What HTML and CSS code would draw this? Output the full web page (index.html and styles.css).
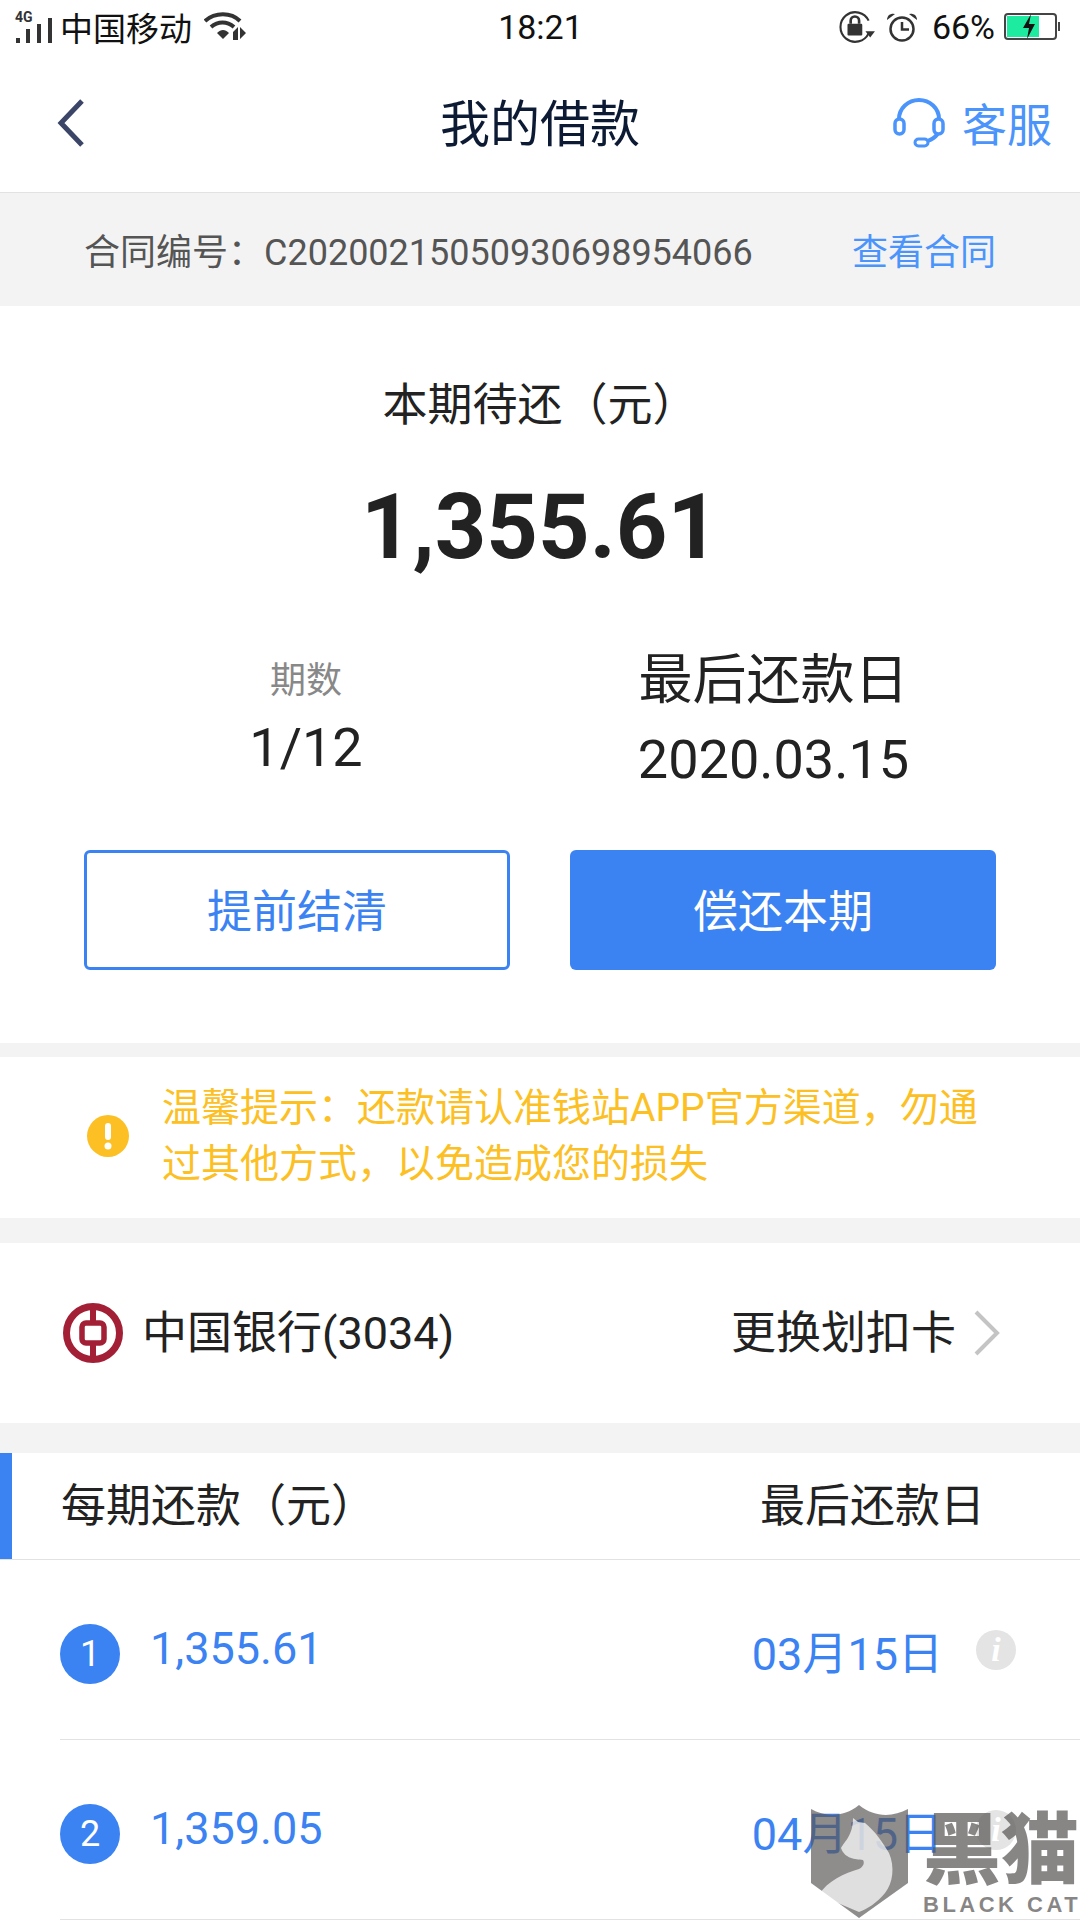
FILE: index.html
```html
<!DOCTYPE html>
<html>
<head lang="zh">
  <meta charset="UTF-8">
  <title>我的借款</title>
  <link rel="stylesheet" href="styles.css">
</head>
<body>
  <div class="page">
    <div class="status">
      <div class="status-left">
        <svg class="signal" width="40" height="34" viewBox="0 0 40 34">
          <text x="0" y="12" class="signal-type">4G</text>
          <rect x="1" y="28" width="4" height="5" fill="#333"/>
          <rect x="11" y="19" width="4" height="14" fill="#333"/>
          <rect x="22" y="14" width="4" height="19" fill="#333"/>
          <rect x="33" y="8" width="4" height="25" fill="#333"/>
        </svg>
        <span class="carrier">中国移动</span>
        <svg class="wifi" width="44" height="30" viewBox="0 0 44 30">
          <path d="M1 9 C11 0 27 0 36 9" fill="none" stroke="#333" stroke-width="4"/>
          <path d="M7 15 C14 9 23 9 30 15" fill="none" stroke="#333" stroke-width="4"/>
          <path d="M13 21 C17 17 21 17 25 21 L19 27 Z" fill="#333"/>
          <path d="M29 28 L29 20 L34 15 L34 28 Z M36 15 L42 21 L36 27 Z" fill="#333"/>
        </svg>
      </div>
      <div class="clock">18:21</div>
      <div class="status-right">
        <svg width="38" height="34" viewBox="0 0 36 32">
          <path d="M29 22 A14 14 0 1 1 29 10" fill="none" stroke="#333" stroke-width="2"/>
          <path d="M26 20 L35 20 L30.500 26 Z" fill="#333"/>
          <rect x="9" y="13" width="14" height="11" rx="1" fill="#333"/>
          <path d="M12 13 V10 A4 4 0 0 1 20 10 V13" fill="none" stroke="#333" stroke-width="2.500"/>
        </svg>
        <svg class="alarm" width="32" height="32" viewBox="0 0 32 32">
          <circle cx="16" cy="18" r="11.500" fill="none" stroke="#333" stroke-width="2.500"/>
          <path d="M16 11 V18.500 H23" fill="none" stroke="#333" stroke-width="2.500"/>
          <path d="M1 9 A6 6 0 0 1 9 3 Z M31 9 A6 6 0 0 0 23 3 Z" fill="#333"/>
        </svg>
        <span class="battery-text">66%</span>
        <svg class="battery" width="56" height="28" viewBox="0 0 56 28">
          <rect x="1" y="1" width="51" height="25" rx="3" fill="none" stroke="#444" stroke-width="2"/>
          <rect x="3" y="3" width="32" height="21" fill="#1ceba0"/>
          <rect x="54" y="9" width="2" height="9" fill="#444"/>
          <path d="M27 1 L19 15 L25 15 L23 26 L31 11 L25 11 Z" fill="#111"/>
        </svg>
      </div>
    </div>

    <div class="nav">
      <svg class="nav-back" width="30" height="48" viewBox="0 0 30 48">
        <path d="M26 2 L5 24 L26 46" fill="none" stroke="#3a4568" stroke-width="5"/>
      </svg>
      <div class="nav-title">我的借款</div>
      <div class="nav-service">
        <svg width="54" height="50" viewBox="0 0 54 50">
          <path d="M7 24 V21 A20 19 0 0 1 47 21 V30 C47 38 40 42 32 44" fill="none" stroke="#4a94fb" stroke-width="4"/>
          <rect x="3" y="21" width="9" height="15" rx="4.500" fill="#fff" stroke="#4a94fb" stroke-width="3.500"/>
          <rect x="42" y="21" width="9" height="15" rx="4.500" fill="#fff" stroke="#4a94fb" stroke-width="3.500"/>
          <rect x="23" y="41" width="13" height="7" rx="3.500" fill="#fff" stroke="#4a94fb" stroke-width="3"/>
        </svg>
        <span>客服</span>
      </div>
    </div>

    <div class="contract">
      <span class="contract-no">合同编号：C20200215050930698954066</span>
      <span class="contract-link">查看合同</span>
    </div>

    <div class="summary">
      <div class="summary-label">本期待还（元）</div>
      <div class="summary-amount">1,355.61</div>
      <div class="summary-info">
        <div class="info-cell">
          <div class="info-small">期数</div>
          <div class="info-num">1/12</div>
        </div>
        <div class="info-cell">
          <div class="info-big">最后还款日</div>
          <div class="info-date">2020.03.15</div>
        </div>
      </div>
      <div class="actions">
        <div class="btn btn-line">提前结清</div>
        <div class="btn btn-fill">偿还本期</div>
      </div>
    </div>

    <div class="tip">
      <div class="tip-icon">
        <svg width="42" height="42" viewBox="0 0 42 42">
          <circle cx="21" cy="21" r="21" fill="#fcc024"/>
          <rect x="18" y="8" width="6" height="17" rx="3" fill="#fff"/>
          <circle cx="21" cy="31" r="3.500" fill="#fff"/>
        </svg>
      </div>
      <div class="tip-text">温馨提示：还款请认准钱站APP官方渠道，勿通<br>过其他方式，以免造成您的损失</div>
    </div>

    <div class="bank">
      <svg class="bank-logo" width="60" height="60" viewBox="0 0 60 60">
        <circle cx="30" cy="30" r="26.500" fill="none" stroke="#a31f36" stroke-width="7"/>
        <rect x="19" y="20" width="22" height="20" rx="4" fill="none" stroke="#a31f36" stroke-width="5.500"/>
        <rect x="27" y="4" width="6" height="15" fill="#a31f36"/>
        <rect x="27" y="41" width="6" height="15" fill="#a31f36"/>
      </svg>
      <span class="bank-name">中国银行(3034)</span>
      <span class="bank-change">更换划扣卡</span>
      <svg class="bank-arrow" width="28" height="46" viewBox="0 0 28 46">
        <path d="M3 2 L24 23 L3 44" fill="none" stroke="#c4c4c4" stroke-width="4"/>
      </svg>
    </div>

    <div class="plan">
      <div class="plan-head">
        <span>每期还款（元）</span>
        <span class="plan-head-date">最后还款日</span>
      </div>
      <ul class="plan-list">
        <li class="plan-row">
          <span class="plan-no">1</span>
          <span class="plan-money">1,355.61</span>
          <span class="plan-date">03月15日</span>
          <span class="plan-info">i</span>
        </li>
        <li class="plan-row">
          <span class="plan-no">2</span>
          <span class="plan-money">1,359.05</span>
          <span class="plan-date">04月15日</span>
          <span class="plan-info">i</span>
        </li>
      </ul>
    </div>

    <!-- 水印 -->
    <div class="mark">
      <svg width="98" height="114" viewBox="0 0 98 114">
        <path d="M0 4 C14 12 32 13 48 0 C64 13 82 12 97 4 V78 L48 113 L0 78 Z" fill="rgba(90,86,86,.68)"/>
        <path d="M42 13 L47 17 L54 18 C64 26 72 38 78 48 C84 62 82 78 74 88 C66 98 56 104 48 107 L8 90 C16 76 34 68 48 64 C52 62 54 58 52 55 C44 54 34 54 30 43 C34 36 42 30 42 13 Z" fill="rgba(255,255,255,.72)"/>
      </svg>
      <div class="mark-words">
        <div class="mark-cn">黑猫</div>
        <div class="mark-en">BLACK CAT</div>
      </div>
    </div>
  </div>
</body>
</html>
```

FILE: styles.css
```css
* {
  margin: 0;
  padding: 0;
  box-sizing: border-box;
}
ul {
  list-style: none;
}
body {
  background: #fff;
  font-family: Roboto, "Noto Sans CJK SC", sans-serif;
  color: #222;
}
.page {
  position: relative;
  width: 1080px;
  height: 1920px;
  overflow: hidden;
}

/* status bar */
.status {
  height: 60px;
  padding: 0 20px 6px 15px;
  display: grid;
  grid-template-columns: 1fr auto 1fr;
  align-items: center;
}
.status-left {
  display: flex;
  align-items: center;
}
.signal-type {
  font-size: 14px;
  font-weight: 700;
  fill: #333;
}
.carrier {
  margin-left: 5px;
  font-size: 33px;
  color: #111;
}
.wifi {
  margin-left: 12px;
}
.clock {
  padding-left: 6px;
  font-size: 34px;
  color: #111;
}
.status-right {
  display: flex;
  align-items: center;
  justify-content: flex-end;
}
.alarm {
  margin-left: 10px;
}
.battery-text {
  margin-left: 14px;
  font-size: 34px;
  color: #111;
}
.battery {
  margin-left: 9px;
}

/* title */
.nav {
  position: relative;
  height: 133px;
  display: flex;
  align-items: center;
  justify-content: center;
  border-bottom: 1px solid #e2e2e2;
}
.nav-back {
  position: absolute;
  left: 56px;
  top: 39px;
}
.nav-title {
  margin-top: -12px;
  font-size: 50px;
  color: #0c1a33;
}
.nav-service {
  position: absolute;
  right: 28px;
  top: 30px;
  display: flex;
  align-items: center;
  gap: 16px;
  font-size: 45px;
  color: #4a94fb;
}

/* contract */
.contract {
  height: 113px;
  padding: 0 84px 2px 84px;
  background: #f3f3f3;
  display: flex;
  align-items: center;
  justify-content: space-between;
  font-size: 36px;
}
.contract-no {
  color: #555;
}
.contract-link {
  color: #4a94fb;
}

/* this period */
.summary {
  height: 751px;
  padding-top: 70px;
  border-bottom: 14px solid #f3f3f3;
}
.summary-label {
  text-align: center;
  font-size: 45px;
  line-height: 60px;
}
.summary-amount {
  margin-top: 40px;
  text-align: center;
  font-size: 90px;
  font-weight: 700;
  line-height: 104px;
}
.summary-info {
  margin-top: 67px;
  display: flex;
}
.info-cell {
  text-align: center;
}
.info-cell:first-child {
  width: 612px;
}
.info-cell:last-child {
  width: 323px;
}
.info-small {
  font-size: 36px;
  line-height: 52px;
  padding-top: 8px;
  color: #888;
}
.info-num {
  margin-top: 11px;
  font-size: 54px;
  line-height: 60px;
}
.info-big {
  font-size: 54px;
  line-height: 68px;
}
.info-date {
  margin-top: 13px;
  font-size: 54px;
  line-height: 64px;
}
.actions {
  margin-top: 58px;
  padding: 0 84px;
  display: flex;
  justify-content: space-between;
}
.btn {
  width: 426px;
  height: 120px;
  padding-bottom: 4px;
  border-radius: 6px;
  display: flex;
  align-items: center;
  justify-content: center;
  font-size: 45px;
}
.btn-line {
  border: 3px solid #3b82f3;
  color: #3b82f3;
}
.btn-fill {
  background: #3b82f3;
  color: #fff;
}

/* notice */
.tip {
  height: 161px;
  padding-left: 87px;
  display: flex;
  align-items: center;
}
.tip-text {
  margin-left: 33px;
  margin-top: -4px;
  font-size: 39px;
  line-height: 56px;
  color: #fcc024;
  white-space: nowrap;
}

/* bank card */
.bank {
  height: 205px;
  padding: 0 79px 0 63px;
  border-top: 25px solid #f3f3f3;
  display: flex;
  align-items: center;
  font-size: 45px;
}
.bank-name {
  margin-left: 19px;
  margin-top: -8px;
}
.bank-change {
  margin-left: auto;
  margin-top: -8px;
}
.bank-arrow {
  margin-left: 17px;
}

/* repayment plan */
.plan {
  border-top: 30px solid #f3f3f3;
}
.plan-head {
  height: 107px;
  padding: 0 95px 8px 61px;
  border-bottom: 1px solid #e2e2e2;
  display: flex;
  align-items: center;
  justify-content: space-between;
  font-size: 45px;
  background: linear-gradient(#3b82f3, #3b82f3) left top / 12px 100% no-repeat;
}
.plan-row {
  height: 180px;
  margin-left: 60px;
  padding-right: 64px;
  border-bottom: 1px solid #e2e2e2;
  display: flex;
  align-items: center;
}
.plan-no {
  width: 60px;
  height: 60px;
  margin-top: 8px;
  border-radius: 50%;
  background: #3b82f3;
  color: #fff;
  font-size: 36px;
  display: flex;
  align-items: center;
  justify-content: center;
}
.plan-money {
  margin-left: 30px;
  margin-top: -3px;
  font-size: 45px;
  color: #3b82f3;
}
.plan-date {
  margin-left: auto;
  margin-top: 2px;
  font-size: 45px;
  color: #3b82f3;
}
.plan-info {
  width: 40px;
  height: 40px;
  margin-left: 33px;
  margin-top: 0;
  border-radius: 50%;
  background: #e4e4e4;
  color: #fff;
  font-family: "Liberation Serif", serif;
  font-style: italic;
  font-weight: 700;
  font-size: 34px;
  line-height: 40px;
  text-align: center;
}

/* watermark */
.mark {
  position: absolute;
  left: 811px;
  top: 1805px;
  display: flex;
}
.mark-words {
  margin-left: 14px;
  width: 157px;
}
.mark-cn {
  font-size: 78px;
  font-weight: 900;
  line-height: 90px;
  margin-top: 2px;
  color: rgba(90, 86, 86, .72);
  white-space: nowrap;
}
.mark-en {
  margin-top: -2px;
  font-family: "Liberation Sans", sans-serif;
  font-weight: 700;
  font-size: 22px;
  letter-spacing: 3.500px;
  line-height: 20px;
  color: rgba(90, 86, 86, .72);
  white-space: nowrap;
}
```
